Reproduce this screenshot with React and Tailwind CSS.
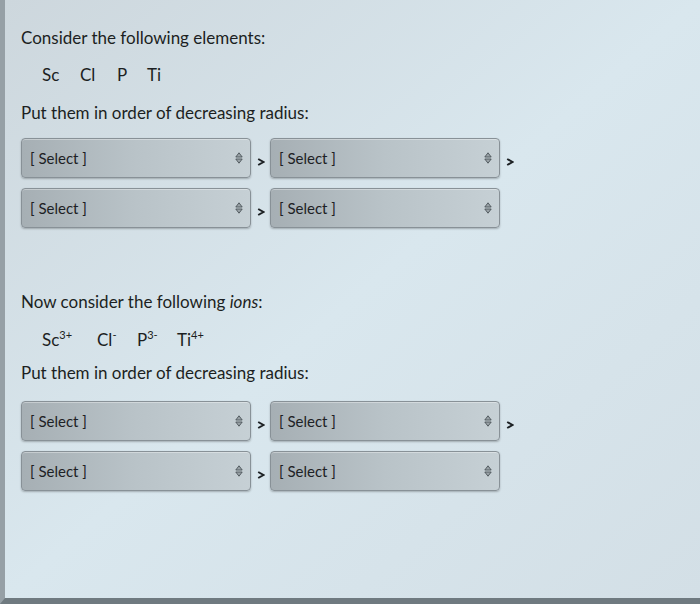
const ELEMENTS = [
  { sym: 'Sc', w: 'w-[38px]' },
  { sym: 'Cl', w: 'w-[37px]' },
  { sym: 'P', w: 'w-[30px]' },
  { sym: 'Ti', w: 'w-[30px]' },
];

const IONS = [
  { sym: 'Sc', charge: '3+', w: 'w-[55px]' },
  { sym: 'Cl', charge: '-', w: 'w-[40px]' },
  { sym: 'P', charge: '3-', w: 'w-[40px]' },
  { sym: 'Ti', charge: '4+', w: 'w-[40px]' },
];

function Spinner() {
  return (
    <svg width="8" height="12" viewBox="0 0 8 12" className="shrink-0">
      <path d="M4 0.8 L7.2 5 L0.8 5 Z" fill="#9aa3a8" stroke="#4a5257" strokeWidth="0.9" strokeLinejoin="round" />
      <path d="M4 11.2 L7.2 7 L0.8 7 Z" fill="#9aa3a8" stroke="#4a5257" strokeWidth="0.9" strokeLinejoin="round" />
    </svg>
  );
}

function SelectBox() {
  return (
    <div className="w-[230px] h-10 flex items-center justify-between pl-[8px] pr-[7px] rounded-[4px] border border-[#889197] bg-gradient-to-r from-[#a6afb4] via-[#b9c3c8] to-[#c6d0d5] shadow-[inset_0_1px_0_rgba(255,255,255,0.35),0_1px_2px_rgba(0,0,0,0.25)]">
      <span className="text-[15px] text-[#1d2124]">[ Select ]</span>
      <Spinner />
    </div>
  );
}

function Chevron() {
  return (
    <div className="w-[19px] h-10 flex justify-center pt-[20px]">
      <svg width="8" height="8" viewBox="0 0 8 8">
        <path d="M1.2 1 L6.5 4 L1.2 7" fill="none" stroke="#1d2124" strokeWidth="2" />
      </svg>
    </div>
  );
}

function SelectRow({ trailing }) {
  return (
    <div className="flex items-start">
      <SelectBox />
      <Chevron />
      <SelectBox />
      {trailing && <Chevron />}
    </div>
  );
}

export default function App() {
  return (
    <div
      className="w-[700px] h-[604px] flex flex-col border-l-[5px] border-l-[#96a0a6] border-b-[6px] border-b-[#6f7a80] bg-gradient-to-br from-[#cdd7dd] via-[#d9e7ee] to-[#d3dfe6] text-[#1c1f22] overflow-hidden"
      style={{ fontFamily: 'Lato, "Open Sans", sans-serif' }}
    >
      <div className="pl-4 pt-[28px] flex flex-col">
        <div className="h-5 text-[17px] leading-5">Consider the following elements:</div>

        <div className="h-5 mt-[17px] pl-[21px] flex text-[17px] leading-5">
          {ELEMENTS.map(e => (
            <span key={e.sym} className={e.w}>{e.sym}</span>
          ))}
        </div>

        <div className="h-5 mt-[18px] text-[17px] leading-5">Put them in order of decreasing radius:</div>

        <div className="mt-[15px] flex flex-col gap-[10px]">
          <SelectRow trailing />
          <SelectRow />
        </div>

        <div className="h-5 mt-[64px] text-[17px] leading-5">
          Now consider the following <i>ions</i>:
        </div>

        <div className="h-5 mt-[18px] pl-[21px] flex text-[17px] leading-5">
          {IONS.map(e => (
            <span key={e.sym} className={e.w}>
              {e.sym}
              <sup className="text-[11px] relative -top-[7px]">{e.charge}</sup>
            </span>
          ))}
        </div>

        <div className="h-5 mt-[13px] text-[17px] leading-5">Put them in order of decreasing radius:</div>

        <div className="mt-[18px] flex flex-col gap-[10px]">
          <SelectRow trailing />
          <SelectRow />
        </div>
      </div>
    </div>
  );
}
